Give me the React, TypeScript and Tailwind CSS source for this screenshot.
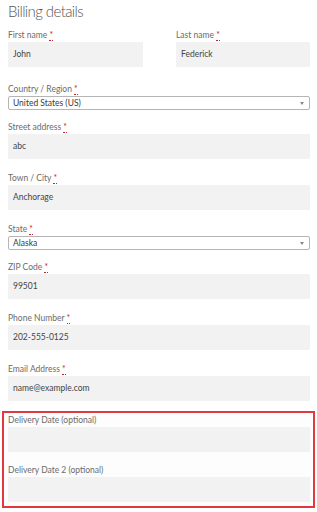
import React from 'react';

const font = { fontFamily: 'Lato, "Open Sans", sans-serif' };

const Req = () => (
    <abbr className="text-[#c0282d] no-underline border-b border-dotted border-[#c0282d]" title="required">*</abbr>
);

interface FieldProps {
    label: string;
    value?: string;
    required?: boolean;
    className?: string;
}

const TextField: React.FC<FieldProps> = ({ label, value, required = true, className = 'mb-[14px]' }) => (
    <div className={className}>
        <label className="block text-[8.5px] leading-[10px] text-[#6b6b6b] mb-[2px]">
            {label}
            {required && <Req />}
        </label>
        <div className="h-[25px] bg-[#f2f2f2] px-[5px] flex items-center text-[8.5px] text-[#444]">{value}</div>
    </div>
);

const SelectField: React.FC<FieldProps> = ({ label, value, className = 'mb-[12px]' }) => (
    <div className={className}>
        <label className="block text-[8.5px] leading-[10px] text-[#6b6b6b] mb-[2px]">
            {label}
            <Req />
        </label>
        <div className="h-[14px] bg-white border border-[#b5b5b5] rounded-[2px] pl-[4px] pr-[5px] flex items-center justify-between text-[8.5px] text-[#3a3a3a]">
            <span>{value}</span>
            <span className="w-0 h-0 border-l-[2px] border-r-[2px] border-t-[3px] border-l-transparent border-r-transparent border-t-[#888]" />
        </div>
    </div>
);

export default function App() {
    return (
        <div className="w-[317px] h-[512px] bg-white pl-2 pr-[7px] overflow-hidden" style={font}>
            <h3 className="h-[20px] mt-[1px] mb-[9px] text-[15px] leading-[20px] tracking-[-0.6px] font-light text-[#555]">Billing details</h3>
            <div className="flex gap-[33px]">
                <TextField label="First name " value="John" className="w-[135px] mb-[17px]" />
                <TextField label="Last name " value="Federick" className="flex-1 mb-[17px]" />
            </div>
            <SelectField label="Country / Region " value="United States (US)" />
            <TextField label="Street address " value="abc" />
            <TextField label="Town / City " value="Anchorage" />
            <SelectField label="State " value="Alaska" />
            <TextField label="ZIP Code " value="99501" />
            <TextField label="Phone Number " value="202-555-0125" />
            <TextField label="Email Address " value="name@example.com" className="mb-[10px]" />
            <div className="ml-[-6px] mr-[-5px] border-2 border-[#e2383f] bg-[#fdfdfd] pl-[4px] pr-[3px] pt-[2px] pb-[4px]">
                <TextField label="Delivery Date (optional)" required={false} className="mb-[13px]" />
                <TextField label="Delivery Date 2 (optional)" required={false} className="" />
            </div>
        </div>
    );
}
